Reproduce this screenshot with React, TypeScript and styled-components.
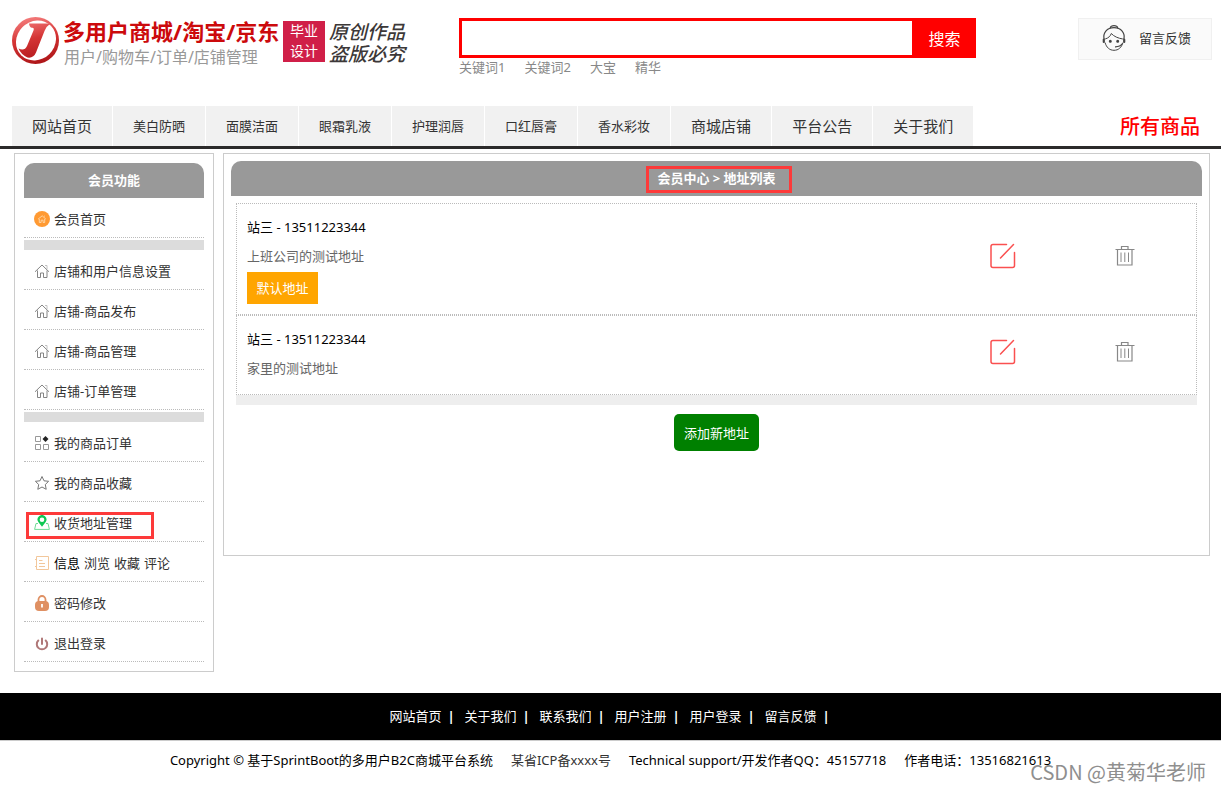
import React from "react";
import styled, { createGlobalStyle, css } from "styled-components";

const GlobalStyle = createGlobalStyle`
  *, *::before, *::after { box-sizing: border-box; }
  body {
    margin: 0;
    background: #fff;
    color: #000;
    font: 13px/20px "Noto Sans", "Noto Sans CJK SC", sans-serif;
  }
  ul, ol, p, h1, h2 { margin: 0; padding: 0; list-style: none; }
  a { color: inherit; text-decoration: none; }
  button, input { font: inherit; margin: 0; padding: 0; border: 0; }
  button { cursor: pointer; }
`;

const annotation = css`
  content: "";
  position: absolute;
  border: 3px solid #fd3a3a;
  pointer-events: none;
`;

const Header = styled.header`
  display: flex;
  align-items: flex-start;
  padding: 17px 9px 0 12px;
  height: 106px;
`;
const Brand = styled.a`
  display: flex;
  width: 447px;
  flex: none;
`;
const BrandName = styled.div`
  width: 220px;
  margin-left: 4px;
  white-space: nowrap;
`;
const BrandTitle = styled.h1`
  color: #cc0a0c;
  font-size: 22px;
  line-height: 28px;
  font-weight: 700;
`;
const BrandSub = styled.p`
  padding-left: 1px;
  color: #999;
  font-size: 16px;
  line-height: 24px;
`;
const Stamp = styled.span`
  width: 42px;
  height: 41px;
  margin-top: 4px;
  background: #d01f48;
  color: #fff;
  font-size: 14px;
  line-height: 20px;
  text-align: center;
`;
const Motto = styled.span`
  display: flex;
  flex-direction: column;
  width: 80px;
  margin: 3px 0 0 4px;
  color: #3c3838;
  font-family: "Noto Sans CJK SC", sans-serif;
  font-size: 19px;
  line-height: 22px;
  font-weight: 500;
  font-style: italic;
`;
const SearchArea = styled.div`
  width: 517px;
  padding-top: 1px;
`;
const SearchForm = styled.form`
  display: flex;
  height: 40px;
  border: 3px solid #f00;
`;
const SearchInput = styled.input`
  flex: 1;
  min-width: 0;
  padding: 0 8px;
  outline: none;
`;
const SearchButton = styled.button`
  width: 61px;
  padding: 2px 0 0 4px;
  background: #f00;
  color: #fff;
  font-size: 16px;
`;
const Keywords = styled.ul`
  display: flex;
  gap: 19px;
  color: #888;
  line-height: 18px;
`;
const Feedback = styled.a`
  display: flex;
  align-items: center;
  gap: 13px;
  width: 134px;
  height: 42px;
  margin: 1px 0 0 auto;
  padding: 0 0 2px 23px;
  border: 1px solid #f0f0f0;
  background: #fafafa;
  color: #333;
`;

const NavBar = styled.nav`
  display: flex;
  align-items: center;
  justify-content: space-between;
  padding: 0 21px 0 12px;
  border-bottom: 3px solid #2b2a2a;
`;
const NavList = styled.ul`
  display: flex;
  gap: 1px;
`;
const NavLink = styled.a<{ $small?: boolean }>`
  display: block;
  padding: 0 20px;
  background: #f1f1f1;
  color: #333;
  font-size: ${(p) => (p.$small ? 13 : 15)}px;
  line-height: 40px;
  white-space: nowrap;
`;
const AllGoods = styled.a`
  padding-top: 2px;
  color: #f00;
  font-size: 20px;
  font-weight: 500;
  line-height: 38px;
`;

const Content = styled.div`
  display: flex;
  align-items: flex-start;
  gap: 9px;
  padding: 4px 11px 21px 14px;
`;
const Sidebar = styled.aside`
  flex: none;
  width: 200px;
  padding: 9px;
  border: 1px solid #ccc;
`;
const PanelTitle = styled.h2`
  border-radius: 10px 10px 0 0;
  background: #999;
  color: #fff;
  font-size: 13px;
  line-height: 35px;
  font-weight: 700;
  text-align: center;
`;
const Marked = styled.span`
  position: relative;
  &::after { ${annotation} inset: -3px -16px -6px -11px; }
`;
const MenuItem = styled.li<{ $marked?: boolean }>`
  position: relative;
  display: flex;
  align-items: center;
  gap: 4px;
  height: 40px;
  padding: 2px 0 0 10px;
  border-bottom: 1px dotted #bbb;
  color: #333;
  svg { flex: none; }
  ${(p) => p.$marked && css`&::after { ${annotation} left: 2px; top: 10px; width: 128px; height: 27px; }`}
`;
const MenuDivider = styled.div`
  height: 10px;
  margin-top: 2px;
  background: #dcdcdc;
`;
const Strong = styled.a`
  color: #000;
`;

const Main = styled.main`
  flex: 1;
  min-width: 0;
  min-height: 403px;
  padding: 7px;
  border: 1px solid #ccc;
`;
const AddressList = styled.ul`
  margin: 7px 5px 9px;
  border-bottom: 10px solid #eee;
`;
const AddressRow = styled.li`
  display: flex;
  align-items: center;
  min-height: 80px;
  padding: 9px 10px 10px;
  border: 1px dotted #bbb;
`;
const AddressInfo = styled.div`
  flex: 1;
  align-self: flex-start;
  line-height: 29px;
`;
const AddressText = styled.p`
  color: #666;
`;
const DefaultBadge = styled.button`
  display: block;
  width: 71px;
  height: 32px;
  margin-top: 1px;
  background: #ffa500;
  color: #fff;
`;
const RowAction = styled.button`
  display: flex;
  justify-content: center;
  width: 13%;
  padding-bottom: 6px;
  background: none;
`;
const AddButton = styled.button`
  display: block;
  height: 37px;
  margin: 0 auto;
  padding: 0 10px;
  border-radius: 5px;
  background: #008000;
  color: #fff;
`;

const Footer = styled.footer`
  position: relative;
`;
const FooterLinks = styled.ul`
  display: flex;
  justify-content: center;
  background: #000;
  color: #fff;
  line-height: 47px;
`;
const FooterItem = styled.li`
  display: flex;
  gap: 6px;
  padding: 0 6px 0 4px;
`;
const FooterBar = styled.span`
  width: 7px;
  font-weight: 700;
  text-align: center;
`;
const Copyright = styled.div`
  display: flex;
  justify-content: center;
  gap: 18px;
  padding-bottom: 12px;
  border-top: 1px solid #ccc;
  line-height: 38px;
  white-space: nowrap;
`;
const Record = styled.a`
  color: #333;
`;
const Watermark = styled.span`
  position: absolute;
  right: 15px;
  bottom: 4px;
  color: #8f8f8f;
  font-family: "Noto Sans CJK SC", sans-serif;
  font-size: 20px;
  line-height: 30px;
  text-shadow: 1px 1px 0 #fff;
`;

const Logo = () => (
  <svg width="47" height="47" viewBox="0 0 47 47" aria-hidden="true">
    <defs>
      <linearGradient id="logoRed" gradientUnits="userSpaceOnUse" x1="18" y1="0" x2="28" y2="47">
        <stop offset="0" stopColor="#f47c7c" />
        <stop offset="0.45" stopColor="#d43434" />
        <stop offset="1" stopColor="#ad1518" />
      </linearGradient>
    </defs>
    <circle cx="23.5" cy="23.5" r="23.5" fill="url(#logoRed)" />
    <ellipse cx="24" cy="23.5" rx="21" ry="19" fill="#fff" transform="rotate(-45 24 23.500)" />
    <path d="M17 6.500H38.500Q34.500 9 32.500 14L24 35.500Q21.500 41.500 15.500 40.500Q9 37.500 6.500 31.500Q12.500 34.500 15 29L21.500 13.500Q22.500 10.500 20 10.800Q17.500 10.500 17 6.500Z" fill="url(#logoRed)" />
  </svg>
);

const ServiceIcon = () => (
  <svg width="24" height="28" viewBox="0 0 24 28" fill="none" stroke="#444" strokeWidth="1.200" aria-hidden="true">
    <path d="M8.300 4.200C8 .8 16 .8 15.700 4.200" />
    <path d="M2.200 15.500C.5 9 5 3.700 12 3.700S23.500 9 21.800 15.500" />
    <path d="M3 18.500C4.500 23.500 7.500 26.300 12 26.300S19.500 23.500 21 18.500" strokeWidth="1" />
    <path d="M3.200 15C6.500 14 8.500 12 9.300 9.500C12 12.500 16 14.200 20.800 15" strokeWidth="1" />
    <path d="M1.800 15.500v2.500M22.200 15.500v2.500" strokeWidth="2.200" strokeLinecap="round" />
    <path d="M20.500 19.500Q18 23 13 22.800" />
    <circle cx="8.300" cy="17.300" r=".9" fill="#333" />
    <circle cx="15.700" cy="17.300" r=".9" fill="#333" />
  </svg>
);

const icon = { width: 16, height: 16, viewBox: "0 0 16 16", fill: "none", "aria-hidden": true } as const;

const MemberIcon = () => (
  <svg {...icon}>
    <circle cx="8" cy="8" r="8" fill="#ff9a33" />
    <path d="M4 8.200 8.200 4.800 11.800 8M5.300 8v3.500h1.800V9.200h2v2.300h1.600V8M10.500 5.500V4.700" stroke="#ffd9ab" strokeWidth=".9" />
  </svg>
);
const HouseIcon = () => (
  <svg {...icon} stroke="#777" strokeWidth=".9">
    <path d="M1 8.800 8 2l7 6.800M3.500 7.500v7h3v-4.500h3v4.500h3.500v-7" />
    <path d="M11 2.500h2v3.500" stroke="#bbb" />
  </svg>
);
const OrdersIcon = () => (
  <svg {...icon} stroke="#999" strokeWidth="1">
    <path d="M1.500 1.500h5v5h-5zM1.500 9.500h5v5h-5zM9.500 9.500h5v5h-5z" />
    <path d="M11.500 1 14.500 4 11.500 7 8.500 4z" fill="#222" stroke="none" />
  </svg>
);
const StarIcon = () => (
  <svg {...icon} stroke="#777" strokeWidth="1" strokeLinejoin="round">
    <path d="M8 1.500 10 5.800 14.600 6.300 11.300 9.500 12.200 14.300 8 12 3.800 14.300 4.700 9.500 1.400 6.300 6 5.800Z" />
  </svg>
);
const AddressIcon = () => (
  <svg {...icon}>
    <path d="M4 8.500H2L.6 14.400H15.400L14 8.500H12" stroke="#6fdc96" />
    <path d="M8 11.800 4.500 7.200A4.400 4.400 0 1 1 11.500 7.200Z" fill="#0fc853" />
    <circle cx="8" cy="4.700" r="2.300" fill="#fff" />
  </svg>
);
const NoteIcon = () => (
  <svg {...icon} stroke="#f2c79b">
    <path d="M2.500 1.500h12v13h-12z" />
    <path d="M5 5.500h3.500M5 8.500h6M5 11.500h6M1 4.500h2M1 11.500h2" />
  </svg>
);
const LockIcon = () => (
  <svg {...icon}>
    <path d="M4.500 8V4.500a3.500 3.500 0 0 1 7 0V8" stroke="#df9063" strokeWidth="1.800" />
    <rect x="1" y="6" width="14" height="10" rx="4" fill="#df9063" />
    <path d="M8 9v3.500" stroke="#fff" strokeWidth="1.800" />
  </svg>
);
const PowerIcon = () => (
  <svg {...icon} stroke="#b07878" strokeWidth="2" strokeLinecap="round">
    <path d="M4.300 5.500a5.200 5.200 0 1 0 7.400 0M8 3.500v5.500" />
  </svg>
);
const EditIcon = () => (
  <svg width="26" height="26" viewBox="0 0 26 26" fill="none" stroke="#fa5050" strokeWidth="1.500" strokeLinecap="round" aria-hidden="true">
    <path d="M16.500 1.500H3Q1 1.500 1 3.500V22.500Q1 24.500 3 24.500H22.500Q24.500 24.500 24.500 22.500V9.500M10.500 15 23.500 1.500" />
  </svg>
);
const TrashIcon = () => (
  <svg width="20" height="20" viewBox="0 0 20 20" fill="none" stroke="#888" aria-hidden="true">
    <path d="M.5 3.500h19M6.500 3.500v-3h6.500v3M2.500 3.500v15.500h14.500V3.500" strokeWidth="1.200" />
    <path d="M6 6.500v9.500M9.800 6.500v9.500M13.500 6.500v9.500" />
  </svg>
);

const navItems = [
  { label: "网站首页" },
  { label: "美白防晒", small: true },
  { label: "面膜洁面", small: true },
  { label: "眼霜乳液", small: true },
  { label: "护理润唇", small: true },
  { label: "口红唇膏", small: true },
  { label: "香水彩妆", small: true },
  { label: "商城店铺" },
  { label: "平台公告" },
  { label: "关于我们" },
];
const shopItems = ["店铺和用户信息设置", "店铺-商品发布", "店铺-商品管理", "店铺-订单管理"];
const footerItems = ["网站首页", "关于我们", "联系我们", "用户注册", "用户登录", "留言反馈"];
const addresses = [
  { contact: "站三 - 13511223344", text: "上班公司的测试地址", isDefault: true },
  { contact: "站三 - 13511223344", text: "家里的测试地址", isDefault: false },
];

export default function App() {
  return (
    <>
      <GlobalStyle />
      <Header>
        <Brand href="#">
          <Logo />
          <BrandName>
            <BrandTitle>多用户商城/淘宝/京东</BrandTitle>
            <BrandSub>用户/购物车/订单/店铺管理</BrandSub>
          </BrandName>
          <Stamp>毕业<br />设计</Stamp>
          <Motto><span>原创作品</span><span>盗版必究</span></Motto>
        </Brand>
        <SearchArea>
          <SearchForm onSubmit={(e) => e.preventDefault()}>
            <SearchInput type="text" aria-label="搜索" />
            <SearchButton type="submit">搜索</SearchButton>
          </SearchForm>
          <Keywords>
            {["关键词1", "关键词2", "大宝", "精华"].map((k) => (
              <li key={k}><a href="#">{k}</a></li>
            ))}
          </Keywords>
        </SearchArea>
        <Feedback href="#"><ServiceIcon />留言反馈</Feedback>
      </Header>

      <NavBar>
        <NavList>
          {navItems.map((n) => (
            <li key={n.label}><NavLink href="#" $small={n.small}>{n.label}</NavLink></li>
          ))}
        </NavList>
        <AllGoods href="#">所有商品</AllGoods>
      </NavBar>

      <Content>
        <Sidebar>
          <PanelTitle>会员功能</PanelTitle>
          <ul>
            <MenuItem><MemberIcon /><a href="#">会员首页</a></MenuItem>
          </ul>
          <MenuDivider />
          <ul>
            {shopItems.map((s) => (
              <MenuItem key={s}><HouseIcon /><a href="#">{s}</a></MenuItem>
            ))}
          </ul>
          <MenuDivider />
          <ul>
            <MenuItem><OrdersIcon /><a href="#">我的商品订单</a></MenuItem>
            <MenuItem><StarIcon /><a href="#">我的商品收藏</a></MenuItem>
            <MenuItem $marked><AddressIcon /><a href="#">收货地址管理</a></MenuItem>
            <MenuItem>
              <NoteIcon />
              <Strong href="#">信息</Strong>
              <a href="#">浏览</a>
              <a href="#">收藏</a>
              <a href="#">评论</a>
            </MenuItem>
            <MenuItem><LockIcon /><a href="#">密码修改</a></MenuItem>
            <MenuItem><PowerIcon /><a href="#">退出登录</a></MenuItem>
          </ul>
        </Sidebar>

        <Main>
          <PanelTitle><Marked>会员中心 &gt; 地址列表</Marked></PanelTitle>
          <AddressList>
            {addresses.map((a) => (
              <AddressRow key={a.text}>
                <AddressInfo>
                  <p>{a.contact}</p>
                  <AddressText>{a.text}</AddressText>
                  {a.isDefault && <DefaultBadge type="button">默认地址</DefaultBadge>}
                </AddressInfo>
                <RowAction type="button" aria-label="编辑"><EditIcon /></RowAction>
                <RowAction type="button" aria-label="删除"><TrashIcon /></RowAction>
              </AddressRow>
            ))}
          </AddressList>
          <AddButton type="button">添加新地址</AddButton>
        </Main>
      </Content>

      <Footer>
        <FooterLinks>
          {footerItems.map((f) => (
            <FooterItem key={f}><a href="#">{f}</a><FooterBar>|</FooterBar></FooterItem>
          ))}
        </FooterLinks>
        <Copyright>
          <span>Copyright © 基于SprintBoot的多用户B2C商城平台系统</span>
          <Record href="#">某省ICP备xxxx号</Record>
          <span>Technical support/开发作者QQ：45157718</span>
          <span>作者电话：13516821613</span>
        </Copyright>
        <Watermark>CSDN @黄菊华老师</Watermark>
      </Footer>
    </>
  );
}
